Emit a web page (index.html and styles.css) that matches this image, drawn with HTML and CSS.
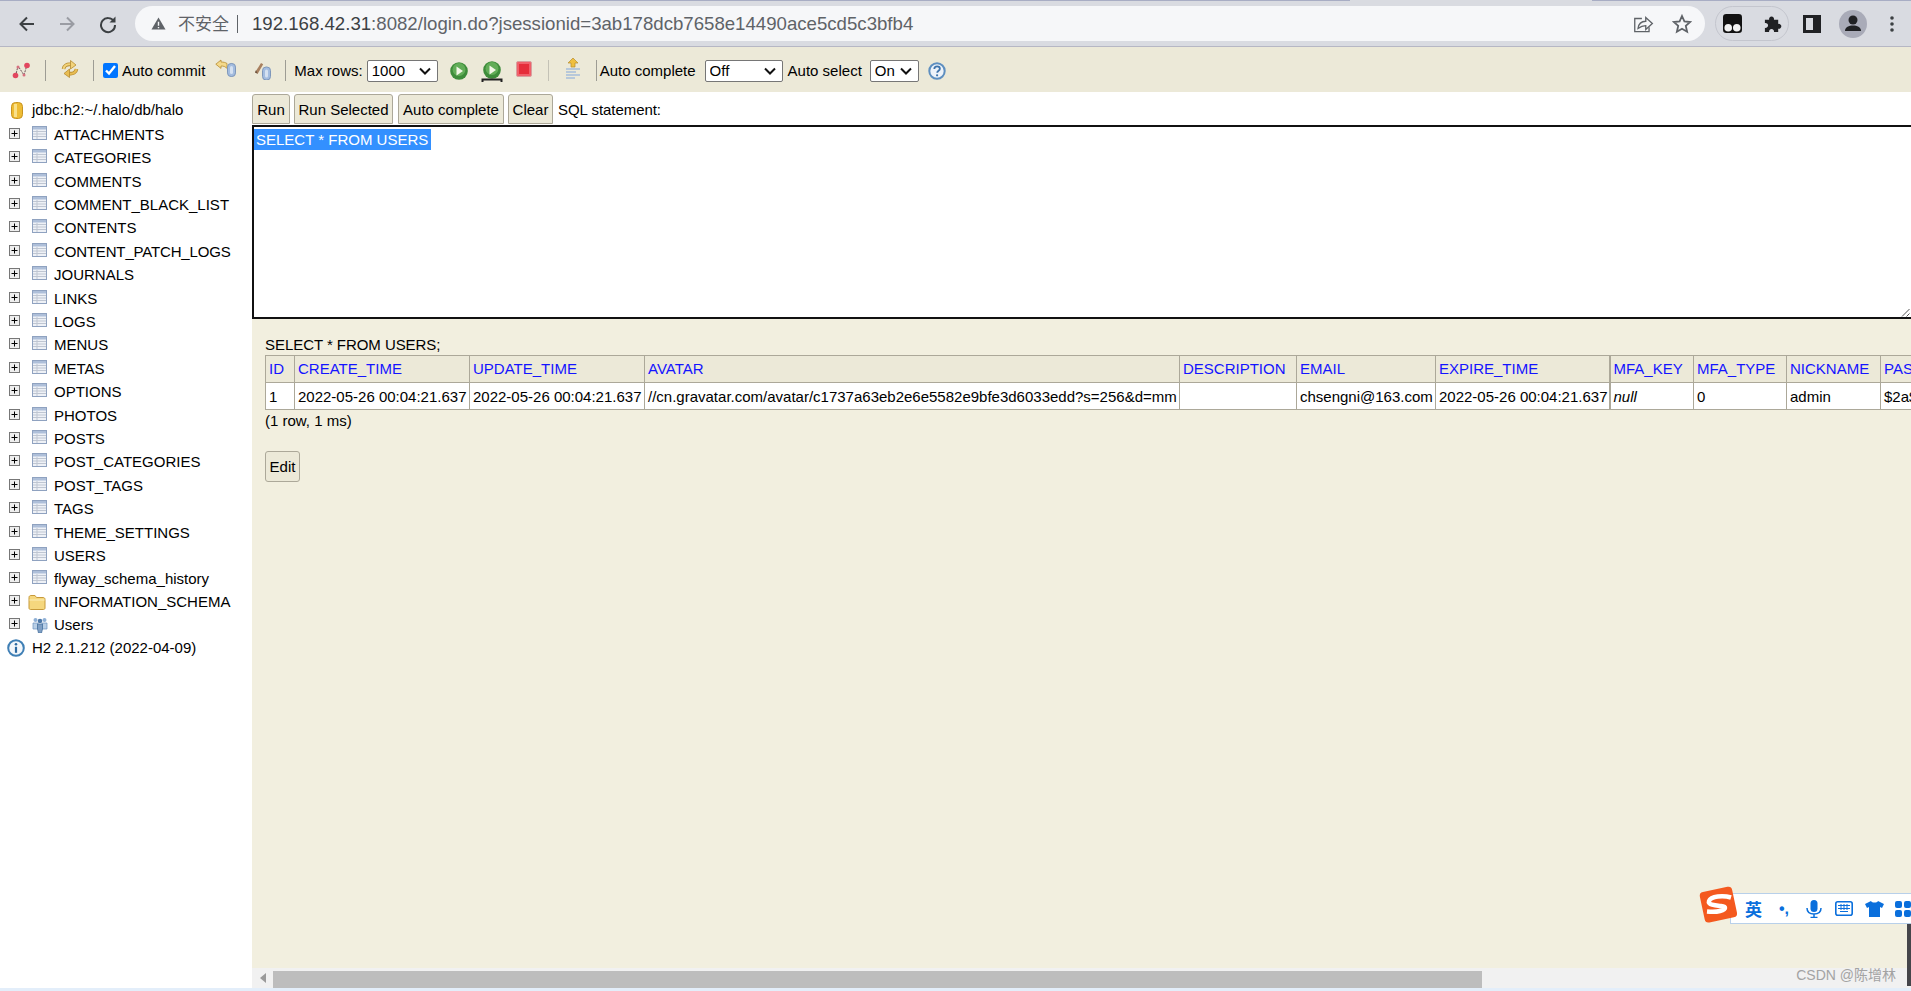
FILE: index.html
```html
<!DOCTYPE html>
<html lang="zh-CN">
<head>
<meta charset="utf-8">
<title>H2 Console</title>
<link rel="stylesheet" href="styles.css">
</head>
<body>
<svg class="defs" width="0" height="0">
  <defs>
    <symbol id="tbl" viewBox="0 0 15 14">
      <rect x=".5" y=".5" width="14" height="13" fill="#eef1f6" stroke="#8fa2c0"/>
      <rect x="1" y="1" width="13" height="2.5" fill="#aebfd9"/>
      <path d="M1 5.500h13M1 8h13M1 10.500h13M5 4v9" stroke="#bfc6d2" fill="none"/>
    </symbol>
    <symbol id="plus" viewBox="0 0 11 11">
      <rect x=".5" y=".5" width="10" height="10" fill="#eee" stroke="#777"/>
      <path d="M2.500 5.500h6M5.500 2.500v6" stroke="#000" fill="none"/>
    </symbol>
  </defs>
</svg>

<header class="chrome">
  <div class="tabline"></div>
  <div class="navbar">
    <svg class="nav-ic nav-back" viewBox="0 0 20 20"><path d="M17 10H4M10 3.500 3.500 10l6.500 6.500" fill="none" stroke="#3c4043" stroke-width="2"/></svg>
    <svg class="nav-ic nav-fwd" viewBox="0 0 20 20"><path d="M3 10h13M10 3.500l6.500 6.500-6.500 6.500" fill="none" stroke="#9a9ca3" stroke-width="2"/></svg>
    <svg class="nav-ic nav-reload" viewBox="0 0 20 20"><path d="M16 7.500A7 7 0 1 0 17 11" fill="none" stroke="#3c4043" stroke-width="2"/><path d="M17.500 2.500v6h-6z" fill="#3c4043"/></svg>
    <div class="omnibox">
      <svg class="warn" viewBox="0 0 16 16"><path d="M8 1.500 15.500 14.500H.5z" fill="#5f6368"/><path d="M8 6v4.500M8 11.700v1.300" stroke="#f6f7f9" stroke-width="1.500"/></svg>
      <span class="insecure">不安全</span>
      <span class="omni-sep"></span>
      <span class="url"><span class="host">192.168.42.31</span>:8082/login.do?jsessionid=3ab178dcb7658e14490ace5cd5c3bfb4</span>
      <svg class="omni-ic omni-share" viewBox="0 0 20 20"><path d="M9 5H2.500v12h13v-4" fill="none" stroke="#5f6368" stroke-width="1.200"/><path d="M5.500 14c.5-4 3-6.500 7-6.500V4l6 5.500-6 5.500v-3.500c-3 0-5 1-7 2.500z" fill="#f6f7f9" stroke="#5f6368" stroke-width="1.200"/></svg>
      <svg class="omni-ic omni-star" viewBox="0 0 20 20"><path d="M10 2l2.400 5.400 5.800.6-4.400 3.900 1.300 5.800L10 14.700l-5.100 3 1.300-5.800L1.800 8l5.800-.6z" fill="none" stroke="#5f6368" stroke-width="1.800"/></svg>
    </div>
    <div class="ext-pill">
      <svg class="ext-ic" viewBox="0 0 20 20"><rect x="0" y="0" width="20" height="20" rx="3.500" fill="#111"/><circle cx="5.500" cy="14.500" r="4" fill="#f2f2f2"/><circle cx="14.500" cy="14.500" r="4" fill="#f2f2f2"/></svg>
      <svg class="ext-ic ext-puzzle" viewBox="0 0 20 20"><path d="M2 6h4.500a2.600 2.600 0 1 1 5 0H16v4.500a2.600 2.600 0 1 1 0 5V19h-4.500a2.600 2.600 0 1 0-5 0H2v-4.500a2.600 2.600 0 1 0 0-5z" fill="#202124"/></svg>
    </div>
    <svg class="side-ic" viewBox="0 0 18 18"><path fill-rule="evenodd" d="M0 0h18v18H0zM3 3v12h7V3z" fill="#202124"/></svg>
    <svg class="avatar" viewBox="0 0 28 28"><circle cx="14" cy="14" r="14" fill="#a9abb8"/><circle cx="14" cy="10" r="4.500" fill="#202124"/><path d="M6 21c0-4 4-5.500 8-5.500s8 1.500 8 5.500z" fill="#202124"/></svg>
    <svg class="dots" viewBox="0 0 4 16"><circle cx="2" cy="2" r="1.800" fill="#3c4043"/><circle cx="2" cy="8" r="1.800" fill="#3c4043"/><circle cx="2" cy="14" r="1.800" fill="#3c4043"/></svg>
  </div>
</header>

<nav class="toolbar">
  <svg class="tb-ic ml-0 w18" viewBox="0 0 18 18"><path d="M3.500 14 6 4l6 9 3-10" fill="none" stroke="#6b5058" stroke-width="1" stroke-dasharray="2 1"/><circle cx="3.500" cy="13.500" r="2.800" fill="#e2475f"/><circle cx="15" cy="3.500" r="2.800" fill="#e2475f"/><circle cx="6" cy="5" r="1.500" fill="#d8707f"/><circle cx="12" cy="13" r="1.500" fill="#d8707f"/></svg>
  <span class="sep ml-15"></span>
  <svg class="tb-ic tb-raise1 ml-15 w18" viewBox="0 0 18 18"><path d="M2.500 9C3 5.500 6 3.800 10 4.500" fill="none" stroke="#b68c30" stroke-width="3.600"/><path d="M2.500 9C3 5.500 6 3.800 10 4.500" fill="none" stroke="#f2d37a" stroke-width="2"/><path d="M9.500 0.500 15 5l-5.500 4z" fill="#f2d37a" stroke="#b68c30" stroke-width=".8"/><path d="M15.500 9c-.5 3.500-3.500 5.200-7.500 4.500" fill="none" stroke="#b68c30" stroke-width="3.600"/><path d="M15.500 9c-.5 3.500-3.500 5.200-7.500 4.500" fill="none" stroke="#e9bd52" stroke-width="2"/><path d="M8.500 9 3 13.500l5.500 4z" fill="#e9bd52" stroke="#b68c30" stroke-width=".8"/></svg>
  <span class="sep ml-14"></span>
  <input class="check ml-9" type="checkbox" checked>
  <span class="ml-4">Auto commit</span>
  <svg class="tb-ic tb-raise ml-10 w21" viewBox="0 0 21 18"><path d="M6 1 .8 5.200 6 9.400V7c2.500 0 4.500 .5 6 2.500V4.500C10.500 3.500 8.500 3 6 3z" fill="#f4d98a" stroke="#b68c30" stroke-width=".8"/><rect x="12.500" y="4.500" width="8" height="13" rx="3.600" fill="#a3bcdf" stroke="#7e97ba"/><rect x="15" y="7" width="3" height="8" rx="1.500" fill="#d5e1f1"/></svg>
  <svg class="tb-ic ml-18 w17" viewBox="0 0 17 18"><path d="M1 10.500 7 1l2.200 1.300-5.500 9.500z" fill="#a8805f"/><path d="M1 10.500 2 8l1.700 3.800z" fill="#6b5340"/><rect x="8.500" y="5" width="8" height="13" rx="3.600" fill="#a3bcdf" stroke="#7e97ba"/><rect x="11" y="7.500" width="3" height="8" rx="1.500" fill="#d5e1f1"/></svg>
  <span class="sep ml-14"></span>
  <span class="ml-8">Max rows:</span>
  <select class="sel sel-rows ml-4"><option>1000</option></select>
  <svg class="tb-ic ml-12 w18" viewBox="0 0 18 18"><circle cx="9" cy="9" r="8.800" fill="#3d8c3a"/><circle cx="9" cy="7.500" r="6.500" fill="#62ad58"/><path d="M6.500 4.500 13 9l-6.500 4.500z" fill="#f1f6e6"/></svg>
  <svg class="tb-ic tb-tall ml-13 w22" viewBox="0 0 22 22"><circle cx="11" cy="9" r="8.800" fill="#3d8c3a"/><circle cx="11" cy="7.500" r="6.500" fill="#62ad58"/><path d="M8.500 4.500 15 9l-6.500 4.500z" fill="#f1f6e6"/><path d="M1.500 21v-2.500h19V21" fill="none" stroke="#222" stroke-width="2"/></svg>
  <svg class="tb-ic tb-up ml-13 w16" viewBox="0 0 16 16"><rect x=".5" y=".5" width="15" height="15" rx="1.500" fill="#f0606a" stroke="#d8a0a0"/><rect x="3" y="3" width="10" height="10" fill="#e52d3a"/></svg>
  <span class="sep sep-light ml-16"></span>
  <svg class="tb-ic tb-hist ml-15 w18" viewBox="0 0 18 22"><path d="M9 0l5 5h-3v4H7V5H4z" fill="#f0c040" stroke="#b68c30" stroke-width=".7"/><path d="M2 11h14M2 14h10M2 17h14M2 20h9" stroke="#a5bdda" stroke-width="1.500"/></svg>
  <span class="sep ml-14"></span>
  <span class="ml-3">Auto complete</span>
  <select class="sel sel-complete ml-9"><option>Off</option></select>
  <span class="ml-5">Auto select</span>
  <select class="sel sel-select ml-8"><option>On</option></select>
  <svg class="tb-ic ml-9 w18" viewBox="0 0 18 18"><circle cx="9" cy="9" r="7.700" fill="#eef3f9" stroke="#5e8fc0" stroke-width="2"/><path d="M6.300 7c0-1.700 1.200-2.600 2.800-2.600s2.800 1 2.800 2.400c0 2-2.700 2-2.700 4" fill="none" stroke="#3f74ab" stroke-width="1.800"/><circle cx="9.100" cy="13.300" r="1.100" fill="#3f74ab"/></svg>
</nav>

<div class="workspace">
  <aside class="tree">
    <div class="node node-root node-top"><svg class="db" viewBox="0 0 12 17"><rect x=".5" y=".5" width="11" height="16" rx="4" fill="#eebc35" stroke="#c89420"/><rect x="3" y="2" width="3" height="13" fill="#f9e08a"/></svg><span>jdbc:h2:~/.halo/db/halo</span></div>
    <div class="node"><svg class="pl"><use href="#plus"/></svg><svg class="ti"><use href="#tbl"/></svg><span>ATTACHMENTS</span></div>
    <div class="node"><svg class="pl"><use href="#plus"/></svg><svg class="ti"><use href="#tbl"/></svg><span>CATEGORIES</span></div>
    <div class="node"><svg class="pl"><use href="#plus"/></svg><svg class="ti"><use href="#tbl"/></svg><span>COMMENTS</span></div>
    <div class="node"><svg class="pl"><use href="#plus"/></svg><svg class="ti"><use href="#tbl"/></svg><span>COMMENT_BLACK_LIST</span></div>
    <div class="node"><svg class="pl"><use href="#plus"/></svg><svg class="ti"><use href="#tbl"/></svg><span>CONTENTS</span></div>
    <div class="node"><svg class="pl"><use href="#plus"/></svg><svg class="ti"><use href="#tbl"/></svg><span class="tight">CONTENT_PATCH_LOGS</span></div>
    <div class="node"><svg class="pl"><use href="#plus"/></svg><svg class="ti"><use href="#tbl"/></svg><span>JOURNALS</span></div>
    <div class="node"><svg class="pl"><use href="#plus"/></svg><svg class="ti"><use href="#tbl"/></svg><span>LINKS</span></div>
    <div class="node"><svg class="pl"><use href="#plus"/></svg><svg class="ti"><use href="#tbl"/></svg><span>LOGS</span></div>
    <div class="node"><svg class="pl"><use href="#plus"/></svg><svg class="ti"><use href="#tbl"/></svg><span>MENUS</span></div>
    <div class="node"><svg class="pl"><use href="#plus"/></svg><svg class="ti"><use href="#tbl"/></svg><span>METAS</span></div>
    <div class="node"><svg class="pl"><use href="#plus"/></svg><svg class="ti"><use href="#tbl"/></svg><span>OPTIONS</span></div>
    <div class="node"><svg class="pl"><use href="#plus"/></svg><svg class="ti"><use href="#tbl"/></svg><span>PHOTOS</span></div>
    <div class="node"><svg class="pl"><use href="#plus"/></svg><svg class="ti"><use href="#tbl"/></svg><span>POSTS</span></div>
    <div class="node"><svg class="pl"><use href="#plus"/></svg><svg class="ti"><use href="#tbl"/></svg><span>POST_CATEGORIES</span></div>
    <div class="node"><svg class="pl"><use href="#plus"/></svg><svg class="ti"><use href="#tbl"/></svg><span>POST_TAGS</span></div>
    <div class="node"><svg class="pl"><use href="#plus"/></svg><svg class="ti"><use href="#tbl"/></svg><span>TAGS</span></div>
    <div class="node"><svg class="pl"><use href="#plus"/></svg><svg class="ti"><use href="#tbl"/></svg><span>THEME_SETTINGS</span></div>
    <div class="node"><svg class="pl"><use href="#plus"/></svg><svg class="ti"><use href="#tbl"/></svg><span>USERS</span></div>
    <div class="node"><svg class="pl"><use href="#plus"/></svg><svg class="ti"><use href="#tbl"/></svg><span>flyway_schema_history</span></div>
    <div class="node node-short"><svg class="pl"><use href="#plus"/></svg><svg class="folder" viewBox="0 0 18 16"><path d="M1 3.500C1 2 2 1.500 3 1.500h4l1.500 2H15c1 0 2 .5 2 2V14c0 1-.8 1.500-1.500 1.500h-13C1.800 15.500 1 15 1 14z" fill="#f5d77e" stroke="#c79a3a"/><path d="M1.500 6h15" stroke="#fbeeb8"/></svg><span>INFORMATION_SCHEMA</span></div>
    <div class="node node-short"><svg class="pl"><use href="#plus"/></svg><svg class="people" viewBox="0 0 16 17"><circle cx="3.500" cy="4" r="2" fill="#8fb0d6"/><circle cx="12.500" cy="4" r="2" fill="#8fb0d6"/><path d="M1 7h5v6H1zM10 7h5v6h-5z" fill="#b9cfe6" stroke="#6a90bd" stroke-width=".7"/><circle cx="8" cy="5" r="2.300" fill="#4d78a8"/><path d="M5.500 8h5v5l-1 4h-3l-1-4z" fill="#7f9fc4" stroke="#3f6a9a" stroke-width=".7"/></svg><span>Users</span></div>
    <div class="node node-root"><svg class="info" viewBox="0 0 18 18"><circle cx="9" cy="9" r="7.800" fill="#f3f7fb" stroke="#3f7fb5" stroke-width="2"/><circle cx="9" cy="5.200" r="1.300" fill="#2c6aa2"/><path d="M9 7.800v6" stroke="#2c6aa2" stroke-width="2.200"/></svg><span>H2 2.1.212 (2022-04-09)</span></div>
  </aside>

  <main class="main">
    <section class="query">
      <div class="query-bar">
        <button class="tab-btn btn-run" type="button">Run</button>
        <button class="tab-btn btn-sel" type="button">Run Selected</button>
        <button class="tab-btn btn-auto" type="button">Auto complete</button>
        <button class="tab-btn btn-clear" type="button">Clear</button>
        <span class="stmt-label">SQL statement:</span>
      </div>
      <div class="sql">
        <span class="sql-sel">SELECT * FROM USERS</span>
        <svg class="grip" viewBox="0 0 10 10"><path d="M9.500 2 2 9.500M9.500 6.500 6.500 9.500" stroke="#555" fill="none"/></svg>
      </div>
    </section>

    <section class="result">
      <div class="echo">SELECT * FROM USERS;</div>
      <table class="grid">
        <colgroup>
          <col class="c-id"><col class="c-time"><col class="c-time"><col class="c-avatar"><col class="c-desc"><col class="c-email"><col class="c-exp"><col class="c-key"><col class="c-type"><col class="c-nick"><col class="c-pass">
        </colgroup>
        <thead>
          <tr><th>ID</th><th>CREATE_TIME</th><th>UPDATE_TIME</th><th>AVATAR</th><th>DESCRIPTION</th><th>EMAIL</th><th class="cell-edge">EXPIRE_TIME</th><th>MFA_KEY</th><th>MFA_TYPE</th><th>NICKNAME</th><th>PASSWORD</th></tr>
        </thead>
        <tbody>
          <tr><td>1</td><td>2022-05-26 00:04:21.637</td><td>2022-05-26 00:04:21.637</td><td>//cn.gravatar.com/avatar/c1737a63eb2e6e5582e9bfe3d6033edd?s=256&amp;d=mm</td><td></td><td>chsengni@163.com</td><td class="cell-edge">2022-05-26 00:04:21.637</td><td><i>null</i></td><td>0</td><td>admin</td><td>$2a$10$Xk3mQ7nT</td></tr>
        </tbody>
      </table>
      <div class="count">(1 row, 1 ms)</div>
      <button class="edit" type="button">Edit</button>
    </section>

    <div class="hbar">
      <svg class="hbar-arrow" viewBox="0 0 6 10"><path d="M6 0v10L0 5z" fill="#9a9a9a"/></svg>
      <div class="hbar-thumb"></div>
    </div>
  </main>
</div>
<div class="bottom-strip"></div>

<aside class="ime">
  <svg class="ime-logo" viewBox="0 0 40 38"><rect x="3" y="3" width="33" height="31" rx="4" fill="#f4591f" transform="rotate(-12 20 19)"/><path d="M32 11.500C24 9 12 10 10 15c-1.500 4 7 4.500 12 5 5 .5 6 3-1 5-3 .8-8 1-13 .5" fill="none" stroke="#fff" stroke-width="4.500"/></svg>
  <div class="ime-bar">
    <span class="ime-lang">英</span>
    <span class="ime-punc">•,</span>
    <svg class="ime-ic ime-mic" viewBox="0 0 16 18"><rect x="4.500" y="0" width="7" height="12" rx="3.500" fill="#0a6fdc"/><path d="M1 8c0 4 3 6 7 6s7-2 7-6M8 14v3M4.500 17.500h7" fill="none" stroke="#0a6fdc" stroke-width="1.500"/></svg>
    <svg class="ime-ic ime-kb" viewBox="0 0 18 15"><rect x=".8" y=".8" width="16.400" height="13.400" rx="2" fill="none" stroke="#0a6fdc" stroke-width="1.600"/><path d="M3 4.500h12M3 7.500h12M5 10.500h8M6 3v6M9 3v6M12 3v6" stroke="#0a6fdc"/></svg>
    <svg class="ime-ic ime-shirt" viewBox="0 0 19 16"><path d="M6 0c1 2 6 2 7 0l6 3-2 4-2-1v10H4V6L2 7 0 3z" fill="#0a6fdc"/></svg>
    <svg class="ime-ic ime-grid" viewBox="0 0 16 16"><rect width="7" height="7" rx="2" fill="#0a6fdc"/><rect x="9" width="7" height="7" rx="2" fill="#0a6fdc"/><rect y="9" width="7" height="7" rx="2" fill="#0a6fdc"/><rect x="9" y="9" width="7" height="7" rx="2" fill="#0a6fdc"/></svg>
  </div>
</aside>
<div class="edge"></div>
<div class="watermark">CSDN @陈增林</div>
</body>
</html>
```
FILE: styles.css
```css
* { box-sizing: border-box; }
html, body { margin: 0; height: 100%; }
body {
  width: 1911px; height: 991px; overflow: hidden; position: relative;
  display: flex; flex-direction: column;
  font: 15px/17px "Liberation Sans", Arial, sans-serif; color: #000; background: #fff;
}
.defs { position: absolute; }

/* browser chrome */
.chrome { height: 47px; flex: none; background: #d9dbe1; border-bottom: 1px solid #b6b7c4; }
.tabline { height: 1px; background: linear-gradient(to right, #a8adc4 1350px, #d9dbe1 1350px, #d9dbe1 1592px, #a8adc4 1592px); }
.navbar { display: flex; align-items: center; height: 35px; margin-top: 5px; }
.nav-ic { width: 20px; height: 20px; flex: none; }
.nav-back { margin-left: 17px; }
.nav-fwd { margin-left: 20px; }
.nav-reload { margin-left: 21px; }
.omnibox {
  display: flex; align-items: center; width: 1570px; height: 35px; margin-left: 17px;
  background: #f6f7f9; border-radius: 18px; flex: none;
}
.warn { width: 15px; height: 15px; margin-left: 16px; flex: none; }
.insecure { margin-left: 12px; margin-top: -2px; font: 17px/20px "Noto Sans CJK SC", sans-serif; color: #5f6368; }
.omni-sep { width: 1px; height: 18px; background: #5f6368; margin-left: 8px; }
.url { margin-left: 14px; font-size: 18.640px; line-height: 22px; color: #5f6368; white-space: nowrap; }
.host { color: #3c4043; }
.omni-ic { width: 20px; height: 20px; flex: none; }
.omni-share { width: 22px; height: 22px; margin-left: auto; }
.omni-star { margin-left: 18px; margin-right: 13px; }
.ext-pill {
  display: flex; align-items: center; width: 74px; height: 35px; margin-left: 10px; flex: none;
  border: 1px solid #c4c6ce; border-radius: 18px;
}
.ext-ic { width: 19px; height: 19px; margin-left: 7px; flex: none; }
.ext-puzzle { margin-left: 21px; }
.side-ic { width: 18px; height: 18px; margin-left: 14px; flex: none; }
.avatar { width: 28px; height: 28px; margin-left: 18px; flex: none; }
.dots { width: 4px; height: 16px; margin-left: 23px; flex: none; }

/* toolbar */
.toolbar {
  display: flex; align-items: center; height: 45px; flex: none; padding: 2px 0 0 12px;
  background: #ece9d8; white-space: nowrap;
}
.tb-ic { height: 18px; flex: none; }
.tb-tall { height: 22px; margin-top: 3px; }
.tb-up { height: 16px; margin-top: -3px; }
.tb-hist { height: 22px; margin-top: -3px; }
.tb-raise { margin-top: -6px; }
.tb-raise1 { margin-top: -3px; }
.w16 { width: 16px; } .w17 { width: 17px; } .w18 { width: 18px; } .w21 { width: 21px; } .w22 { width: 22px; }
.ml-0 { margin-left: 0; } .ml-3 { margin-left: 3px; } .ml-4 { margin-left: 4px; } .ml-5 { margin-left: 5px; }
.ml-8 { margin-left: 8px; } .ml-9 { margin-left: 9px; } .ml-10 { margin-left: 10px; } .ml-12 { margin-left: 12px; }
.ml-13 { margin-left: 13px; } .ml-14 { margin-left: 14px; } .ml-15 { margin-left: 15px; } .ml-16 { margin-left: 16px; }
.ml-18 { margin-left: 18px; }
.sep { width: 1px; height: 21px; background: #9d9c94; flex: none; }
.sep-light { background: #c4c2b6; }
.check { width: 15px; height: 15px; margin-top: 0; margin-right: 0; margin-bottom: 0; flex: none; }
.sel {
  height: 22px; padding: 0 0 0 4px; font: 15px "Liberation Sans", Arial, sans-serif; color: #000;
  appearance: none; -webkit-appearance: none;
  background: #fff url("data:image/svg+xml,%3Csvg xmlns='http://www.w3.org/2000/svg' width='12' height='8' viewBox='0 0 12 8'%3E%3Cpath d='M1 1.500l5 5 5-5' fill='none' stroke='%23111' stroke-width='2'/%3E%3C/svg%3E") no-repeat right 6px center;
  border: 1px solid #767676; border-radius: 2px; flex: none;
}
.sel-rows { width: 71px; }
.sel-complete { width: 78px; }
.sel-select { width: 49px; }

/* layout */
.workspace { display: flex; flex: 1; min-height: 0; }
.tree { width: 252px; flex: none; padding-top: 6px; background: #fff; overflow: hidden; }
.node { display: flex; align-items: center; height: 23.400px; padding-left: 9px; white-space: nowrap; }
.node-root { padding-left: 0; }
.node-top { margin-bottom: 1.300px; }
.node-short { height: 22.500px; }
.tight { letter-spacing: -.16px; }
.pl { width: 11px; height: 11px; flex: none; margin-bottom: 2px; }
.ti { width: 15px; height: 14px; flex: none; margin: 0 7px 3px 12px; }
.db { width: 12px; height: 17px; flex: none; margin: 2px 9px 0 11px; }
.folder { width: 18px; height: 16px; flex: none; margin: 1px 8px 0 8px; }
.people { width: 16px; height: 17px; flex: none; margin: 1px 6px 0 12px; }
.info { width: 18px; height: 18px; flex: none; margin: 2px 7px 0 7px; }

.main { flex: 1; min-width: 0; display: flex; flex-direction: column; overflow: hidden; background: #f2efdf; }
.query { flex: none; background: #fff; height: 225px; padding-top: 2px; }
.query-bar { display: flex; align-items: center; gap: 4px; height: 30px; }
.tab-btn {
  height: 30px; padding: 0; font: 15px "Liberation Sans", Arial, sans-serif; color: #000;
  background: #ece9d8; border: 1px solid #aca899; border-radius: 3px 3px 0 0; flex: none;
}
.btn-run { width: 38px; }
.btn-sel { width: 99px; }
.btn-auto { width: 106px; margin-left: 1px; }
.btn-clear { width: 45px; }
.stmt-label { margin-left: 1px; letter-spacing: -.05px; }
.sql {
  position: relative; width: 1661px; height: 194px; margin-top: 1px; padding: 2px 0;
  border: 2px solid #111; background: #fff;
}
.sql-sel { display: inline-block; padding: 2px 3px 2px 2px; background: #3390ff; color: #fff; }
.grip { position: absolute; right: 1px; bottom: 0; width: 10px; height: 10px; }

.result { flex: 1; min-height: 0; padding: 19px 0 0 13px; overflow: hidden; }
.echo { height: 19px; letter-spacing: -.05px; }
.grid { table-layout: fixed; width: 2100px; border-collapse: collapse; }
.grid th, .grid td { height: 27px; padding: 0 3px; border: 1px solid #aca899; text-align: left; font-weight: 400; white-space: nowrap; overflow: hidden; }
.grid th { padding-bottom: 2px; background: #ece9d8; color: #1414ff; }
.grid td { background: #fff; }
.grid .cell-edge { border-right-width: 2px; }
.c-id { width: 29px; } .c-time { width: 175px; } .c-avatar { width: 535px; } .c-desc { width: 117px; }
.c-email { width: 139px; } .c-exp { width: 174px; } .c-key { width: 84px; } .c-type { width: 93px; }
.c-nick { width: 94px; } .c-pass { width: 485px; }
.count { margin-top: 2px; }
.edit {
  display: block; width: 35px; height: 31px; margin-top: 22px; padding: 0;
  font: 15px "Liberation Sans", Arial, sans-serif; color: #000;
  background: #ece9d8; border: 1px solid #aca899; border-radius: 3px;
}

.hbar { flex: none; display: flex; align-items: center; height: 20px; background: #f1f1f1; }
.hbar-arrow { width: 6px; height: 10px; margin-left: 8px; flex: none; }
.hbar-thumb { width: 1209px; height: 17px; margin-left: 7px; margin-top: 2px; background: #bdbdbd; }
.bottom-strip { height: 3px; flex: none; background: #e3eefa; }

/* overlays */
.ime { position: absolute; left: 1699px; top: 886px; width: 212px; height: 39px; }
.ime-logo { position: absolute; left: 0; top: 0; width: 40px; height: 38px; z-index: 1; }
.ime-bar {
  display: flex; align-items: center; position: absolute; left: 31px; top: 7px; width: 181px; height: 31px;
  background: #fff; border: 1px solid #b8d0ea; border-right: 0; overflow: hidden; color: #0a6fdc;
}
.ime-lang { margin-left: 14px; font: 700 17px/20px "Noto Sans CJK SC", sans-serif; }
.ime-punc { margin-left: 17px; width: 16px; font: 700 16px/18px "Liberation Sans", sans-serif; }
.ime-ic { flex: none; }
.ime-mic { width: 16px; height: 18px; margin-left: 11px; }
.ime-kb { width: 18px; height: 15px; margin-left: 13px; }
.ime-shirt { width: 19px; height: 16px; margin-left: 12px; }
.ime-grid { width: 16px; height: 16px; margin-left: 11px; flex: none; }
.edge { position: absolute; left: 1907px; top: 924px; width: 4px; height: 62px; background: #45454a; }
.watermark { position: absolute; right: 15px; top: 966px; font: 14px/18px "Liberation Sans", "Noto Sans CJK SC", sans-serif; color: #a3a3a3; white-space: nowrap; }
```
